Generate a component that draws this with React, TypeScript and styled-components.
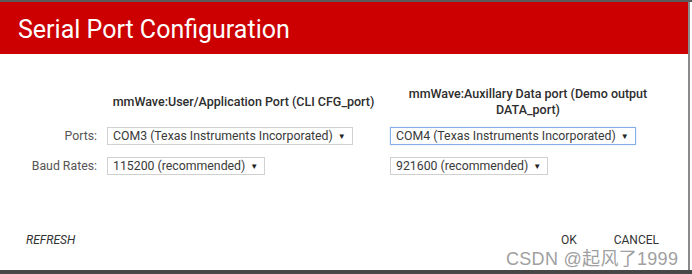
import React from "react";
import styled, { createGlobalStyle } from "styled-components";

const Global = createGlobalStyle`
  html, body { margin: 0; padding: 0; background: #ffffff; }
  body { font-family: Roboto, "Noto Sans", Arial, sans-serif; }
`;

const Frame = styled.div`
  position: relative;
  width: 692px;
  height: 274px;
  box-sizing: border-box;
  border-top: 2px solid #5b5b5b;
  border-bottom: 4px solid #474747;
  display: flex;
  flex-direction: column;
  background: #ffffff;
  overflow: hidden;
`;

const Dialog = styled.div`
  width: 690px;
  flex: 1;
  box-sizing: border-box;
  border-right: 2px solid #8a8a8a;
  display: flex;
  flex-direction: column;
`;

const TitleBar = styled.div`
  height: 52px;
  background: #cc0000;
  display: flex;
  align-items: center;
  padding-left: 18px;
  padding-top: 2px;
  box-sizing: border-box;
`;

const Title = styled.h1`
  margin: 0;
  font-family: Roboto, Arial, sans-serif;
  font-weight: 400;
  font-size: 25px;
  color: #ffffff;
`;

const Body = styled.div`
  display: grid;
  grid-template-columns: 97px 273px 276px;
  grid-template-rows: auto 18px 18px;
  column-gap: 10px;
  row-gap: 12px;
  padding-top: 32px;
  align-items: center;
`;

const ColHeader = styled.div<{ $col: number }>`
  grid-row: 1;
  grid-column: ${(p) => p.$col};
  font-size: 12.5px;
  font-weight: 500;
  color: #2d2d2d;
  text-align: center;
  line-height: 16px;
  margin-bottom: -3px;
`;

const Label = styled.div<{ $row: number }>`
  grid-row: ${(p) => p.$row};
  grid-column: 1;
  font-size: 12.3px;
  color: #555555;
  text-align: right;
`;

const Cell = styled.div<{ $row: number; $col: number }>`
  grid-row: ${(p) => p.$row};
  grid-column: ${(p) => p.$col};
  display: flex;
`;

const Select = styled.div<{ $focus?: boolean }>`
  height: 18px;
  box-sizing: border-box;
  border: 1px solid ${(p) => (p.$focus ? "#87aee6" : "#d0d0d0")};
  ${(p) => (p.$focus ? "box-shadow: 0 0 1px #a9c6ef;" : "")}
  display: flex;
  align-items: center;
  padding: 0 6px 0 5px;
  font-size: 12.3px;
  color: #3a3a3a;
  white-space: nowrap;
  background: #ffffff;
`;

const Caret = styled.span`
  font-size: 8px;
  margin-left: 5px;
  color: #222;
`;

const Footer = styled.div`
  margin-top: auto;
  height: 37px;
  display: flex;
  align-items: flex-start;
  padding: 0 29px 0 26px;
`;

const Refresh = styled.span`
  font-size: 12px;
  font-style: italic;
  color: #333333;
`;

const Actions = styled.div`
  margin-left: auto;
  display: flex;
  gap: 37px;
`;

const Action = styled.span`
  font-size: 12px;
  color: #333333;
`;

const Watermark = styled.div`
  position: absolute;
  left: 506px;
  top: 242px;
  font-family: "Liberation Sans", Arial, "Noto Sans CJK SC", sans-serif;
  font-size: 18px;
  color: #a0a0a0;
  letter-spacing: 0.3px;
  text-shadow: 0 0 1px #ffffff;
  white-space: nowrap;
`;

const Sel = ({ text, focus }: { text: string; focus?: boolean }) => (
  <Select $focus={focus}>
    {text}
    <Caret>▼</Caret>
  </Select>
);

export default function App() {
  return (
    <>
      <Global />
      <Frame>
        <Dialog>
          <TitleBar>
            <Title>Serial Port Configuration</Title>
          </TitleBar>
          <Body>
            <ColHeader $col={2}>mmWave:User/Application Port (CLI CFG_port)</ColHeader>
            <ColHeader $col={3}>mmWave:Auxillary Data port (Demo output DATA_port)</ColHeader>

            <Label $row={2}>Ports:</Label>
            <Cell $row={2} $col={2}>
              <Sel text="COM3 (Texas Instruments Incorporated)" />
            </Cell>
            <Cell $row={2} $col={3}>
              <Sel text="COM4 (Texas Instruments Incorporated)" focus />
            </Cell>

            <Label $row={3}>Baud Rates:</Label>
            <Cell $row={3} $col={2}>
              <Sel text="115200 (recommended)" />
            </Cell>
            <Cell $row={3} $col={3}>
              <Sel text="921600 (recommended)" />
            </Cell>
          </Body>
          <Footer>
            <Refresh>REFRESH</Refresh>
            <Actions>
              <Action>OK</Action>
              <Action>CANCEL</Action>
            </Actions>
          </Footer>
        </Dialog>
        <Watermark>CSDN @起风了1999</Watermark>
      </Frame>
    </>
  );
}
